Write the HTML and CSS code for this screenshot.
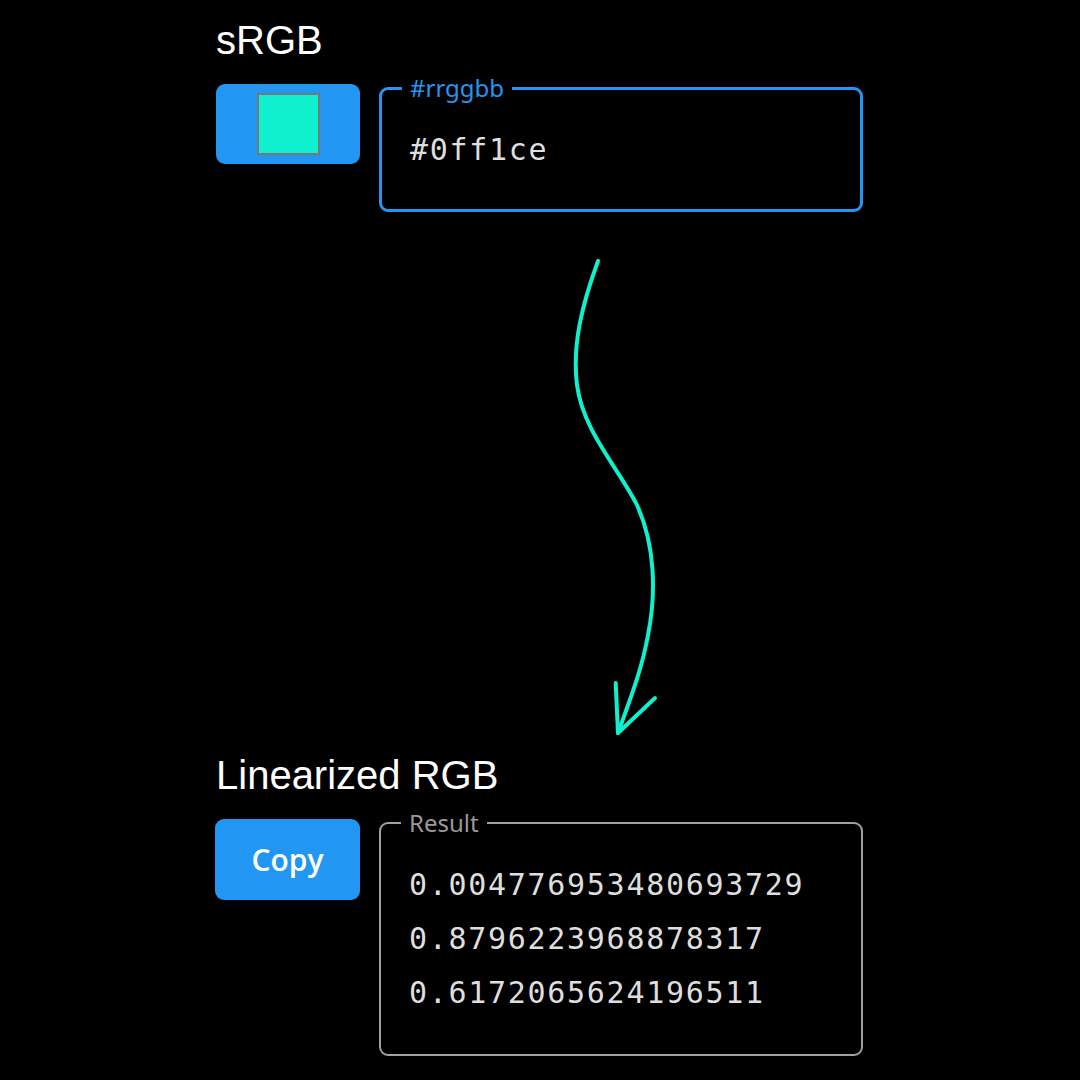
FILE: index.html
```html
<!DOCTYPE html>
<html lang="en">
<head>
<meta charset="utf-8">
<title>sRGB to Linearized RGB</title>
<link rel="stylesheet" href="styles.css">
</head>
<body>
<main class="page">
  <h2 class="title">sRGB</h2>
  <div class="row">
    <div class="swatch-btn"><span class="swatch"></span></div>
    <fieldset class="field field-input">
      <legend class="legend legend-input">#rrggbb</legend>
      <div class="value">#0ff1ce</div>
    </fieldset>
  </div>
  <svg class="arrow" width="648" height="500" viewBox="0 0 648 500" xmlns="http://www.w3.org/2000/svg">
    <path d="M382 16 C366 60 356 100 361 140 C367 185 400 220 420 258 C440 300 440 350 432 390 C426 425 412 460 402 488" fill="none" stroke="#0ff1ce" stroke-width="4" stroke-linecap="round"/>
    <path d="M399.7 438 L402 488 L439 453" fill="none" stroke="#0ff1ce" stroke-width="4" stroke-linecap="round" stroke-linejoin="round"/>
  </svg>
  <h2 class="title title-second">Linearized RGB</h2>
  <div class="row">
    <button class="copy" type="button">Copy</button>
    <fieldset class="field field-result">
      <legend class="legend legend-result">Result</legend>
      <div class="lines">
        <div class="value">0.004776953480693729</div>
        <div class="value">0.8796223968878317</div>
        <div class="value">0.6172065624196511</div>
      </div>
    </fieldset>
  </div>
</main>
</body>
</html>
```

FILE: styles.css
```css
html, body {
  margin: 0;
  padding: 0;
  background: #000;
}

.page {
  width: 648px;
  padding: 20px 0 0 216px;
  display: flex;
  flex-direction: column;
  font-family: "Liberation Sans", Arial, sans-serif;
  color: #fff;
}

.title {
  margin: 0;
  font-weight: 400;
  font-size: 40px;
  line-height: 40px;
  color: #fff;
}

.title-second {
  margin-top: 10px;
}

.row {
  display: flex;
  gap: 19px;
  align-items: flex-start;
  margin-top: 24px;
}

.swatch-btn {
  width: 144px;
  height: 80px;
  background: #2196f3;
  border-radius: 9px;
  display: flex;
  align-items: center;
  justify-content: center;
  flex: none;
}

.swatch {
  width: 59px;
  height: 58px;
  background: #0ff1ce;
  border: 2px solid #777;
}

.field {
  margin: 0;
  width: 484px;
  box-sizing: border-box;
  padding: 0 28px;
  border-radius: 9px;
  min-width: 0;
}

.field-input {
  border: 3px solid #2196f3;
  height: 138px;
  margin-top: -10px;
}

.field-result {
  border: 2px solid #a0a0a0;
  height: 247px;
  margin-top: -10px;
}

.legend {
  font-family: "Noto Sans", "Open Sans", sans-serif;
  font-size: 24px;
  line-height: 28px;
  padding: 0 8px;
  margin-left: -8px;
}

.legend-input {
  color: #2196f3;
}

.legend-result {
  color: #9a9a9a;
}

.value {
  font-family: "DejaVu Sans Mono", "Liberation Mono", monospace;
  font-size: 30px;
  letter-spacing: 1.7px;
  color: #dedede;
  line-height: 54px;
}

.field-input .value {
  margin-top: 21px;
}

.lines {
  margin-top: 21px;
}

.copy {
  width: 145px;
  height: 81px;
  flex: none;
  border: 0;
  border-radius: 9px;
  background: #2196f3;
  color: #fff;
  font-family: "Open Sans", "Noto Sans", sans-serif;
  font-weight: 600;
  font-size: 30px;
  margin-left: -1px;
  padding: 0;
}

.arrow {
  display: block;
  margin: 33px 0 0;
}
```
